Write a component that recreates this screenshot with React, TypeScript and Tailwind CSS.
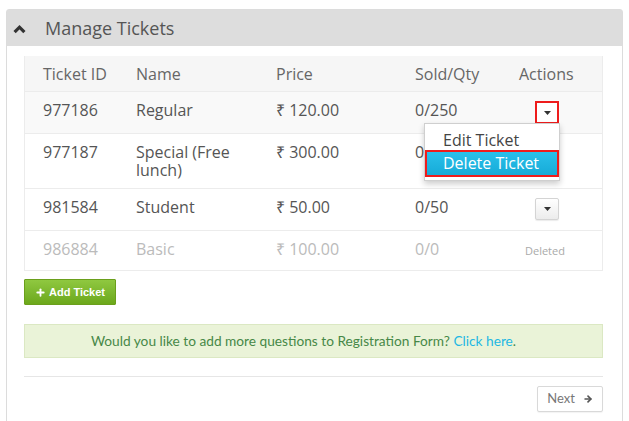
import { Plus, ArrowRight } from "lucide-react";

interface Ticket {
  id: string;
  name: string;
  price: string;
  sold: string;
  deleted?: boolean;
  open?: boolean;
};

const tickets: Ticket[] = [
  { id: "977186", name: "Regular", price: "120.00", sold: "0/250", open: true },
  { id: "977187", name: "Special (Free lunch)", price: "300.00", sold: "0/500" },
  { id: "981584", name: "Student", price: "50.00", sold: "0/50" },
  { id: "986884", name: "Basic", price: "100.00", sold: "0/0", deleted: true },
];

const cols = "grid grid-cols-[93px_140px_139px_104px_102px]";

const Caret = () => (
  <svg width="7" height="4" viewBox="0 0 7 4">
    <path d="M0 0h7L3.5 4z" fill="#333" />
  </svg>
);

const ActionMenu = ({ open }: { open?: boolean }) => {
  return (
    <div className="relative ml-[16px] h-[23px]">
      {open ? (
        <div className="flex h-[23px] w-[24px] items-center justify-center border-2 border-[#ee1c1c] bg-white">
          <Caret />
        </div>
      ) : (
        <div className="flex h-[22px] w-[24px] items-center justify-center rounded-[2px] border border-[#d4d4d4] bg-gradient-to-b from-white to-[#ececec] shadow-[0_1px_1px_rgba(0,0,0,0.08)]">
          <Caret />
        </div>
      )}
      {open && (
        <div className="absolute left-[-111px] top-[22px] z-10 w-[136px] border border-[#cfcfcf] bg-white pt-[6px] pb-[3px] shadow-[0_3px_6px_rgba(0,0,0,0.2)]">
          <div className="h-[20px] pl-[18px] text-left text-[16px] leading-[20px] text-[#444]">Edit Ticket</div>
          <div className="border-2 border-[#ee1c1c]">
            <div className="h-[23px] bg-gradient-to-b from-[#29c0ea] to-[#16abd8] pl-[16px] text-left text-[16px] leading-[23px] text-white">
              Delete Ticket
            </div>
          </div>
        </div>
      )}
    </div>
  );
};

export default function App() {
  return (
    <div className="min-h-[421px] bg-white pt-[9px] pl-[6px] font-['Open_Sans',sans-serif]">
      <div className="w-[617px] rounded-t-[3px] border border-[#dcdcdc] bg-white">
        <div className="flex h-[36px] items-center gap-[19px] bg-[#dddddd] pl-[6px] text-[18px] text-[#555]">
          <svg width="13" height="10" viewBox="0 0 13 10" className="mt-[1px]">
            <path d="M1.6 8.2L6.5 3.2l4.9 5" stroke="#333" strokeWidth="3.2" fill="none" />
          </svg>
          <span>Manage Tickets</span>
        </div>

        <div className="pl-[17px] pr-[19px] pt-[10px] pb-[20px]">
          <div className="border-x border-b border-[#ececec] text-[16px] leading-[18px]">
            <div className={`${cols} h-[35px] items-center bg-[#f6f6f6] text-[#666]`}>
              <div className="pl-[18px]">Ticket ID</div>
              <div className="pl-[18px]">Name</div>
              <div className="pl-[18px]">Price</div>
              <div className="pl-[18px]">Sold/Qty</div>
              <div className="pl-[18px]">Actions</div>
            </div>
            {tickets.map((t, i) => (
              <div
                key={t.id}
                className={`${cols} border-t border-[#ececec] ${i === 0 ? "bg-[#f9f9f9]" : "bg-white"} ${t.deleted ? "text-[#bbb]" : "text-[#555]"}`}
              >
                <div className="py-[9px] pl-[18px]">{t.id}</div>
                <div className="py-[9px] pl-[18px] pr-[10px]">{t.name}</div>
                <div className="py-[9px] pl-[18px]">₹ {t.price}</div>
                <div className="py-[9px] pl-[18px]">{t.sold}</div>
                <div className="py-[9px] pl-[18px]">
                  {t.deleted ? (
                    <span className="ml-[6px] text-[11px] leading-[20px] text-[#aaa]">Deleted</span>
                  ) : (
                    <ActionMenu open={t.open} />
                  )}
                </div>
              </div>
            ))}
          </div>

          <button className="mt-[8px] flex h-[26px] w-[92px] items-center justify-center gap-[3px] rounded-[1px] border border-[#6b9f1c] bg-gradient-to-b from-[#8fc840] to-[#6ca81a] font-['Liberation_Sans',sans-serif] text-[11px] font-bold text-white">
            <Plus size={11} strokeWidth={4} />
            Add Ticket
          </button>

          <div className="mt-[19px] flex h-[34px] items-center justify-center border border-[#dbe8c3] bg-[#eaf3d8] pr-[20px] font-['Lato',sans-serif] text-[13.7px] text-[#468847]">
            <span>
              Would you like to add more questions to Registration Form?{" "}
              <span className="text-[#1fb8e3]">Click here</span>.
            </span>
          </div>

          <div className="mt-[18px] border-t border-[#e6e6e6]" />

          <div className="mt-[9px] flex justify-end">
            <button className="flex h-[26px] w-[66px] items-center justify-center gap-[8px] rounded-[2px] border border-[#d9d9d9] bg-white font-['Lato',sans-serif] text-[13px] text-[#777] shadow-[0_1px_1px_rgba(0,0,0,0.05)]">
              Next
              <ArrowRight size={10} strokeWidth={4} color="#555" />
            </button>
          </div>
        </div>
      </div>
    </div>
  );
}
